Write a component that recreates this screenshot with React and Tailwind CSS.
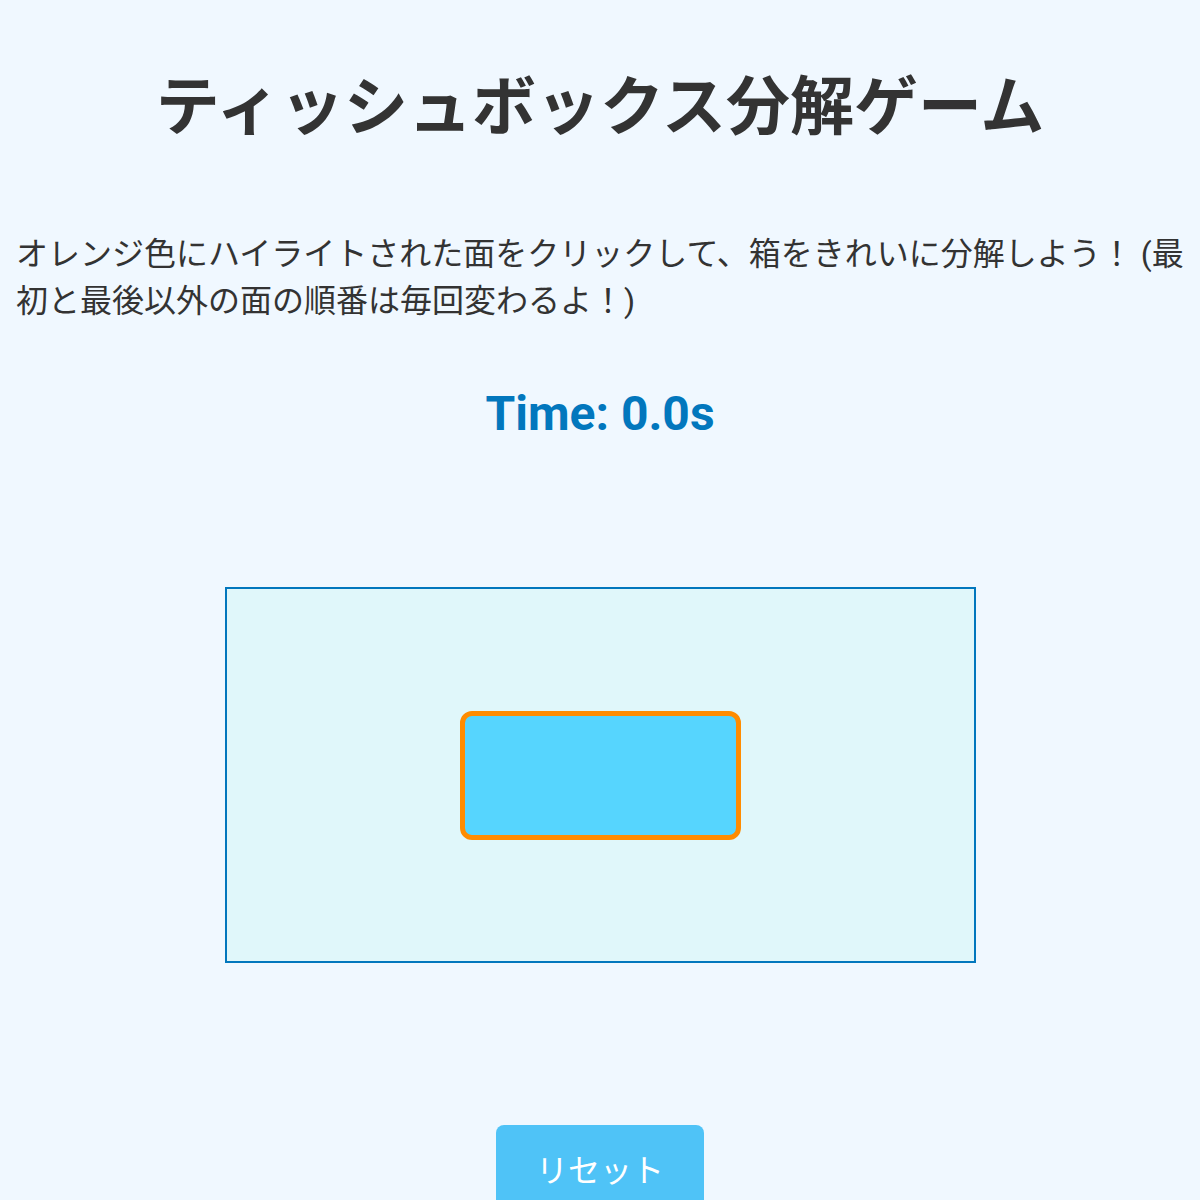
import React from "react";

const App = () => {
  const [time] = React.useState(0);

  return (
    <div
      className="min-h-[1200px] bg-[#f0f8ff] px-[16px] pt-[16px] text-[#333] overflow-hidden"
      style={{ fontFamily: 'Roboto, "Noto Sans CJK JP", sans-serif' }}
    >
      {/* Title */}
      <h1 className="mt-[44px] text-center text-[64px] font-bold leading-[96px]">
        ティッシュボックス分解ゲーム
      </h1>

      {/* Instructions */}
      <p className="mt-[75px] mr-[-6px] text-[32px] leading-[47px]">
        オレンジ色にハイライトされた面をクリックして、箱をきれいに分解しよう！ (最初と最後以外の面の順番は毎回変わるよ！)
      </p>

      {/* Timer */}
      <div className="mt-[53px] text-center text-[48px] font-bold leading-[72px] text-[#0277bd]">
        Time: {time.toFixed(1)}s
      </div>

      {/* Game area */}
      <div className="mt-[137px] flex justify-center">
        <div className="flex h-[376px] w-[751px] items-center justify-center border-2 border-[#0277bd] bg-[#e0f7fa]">
          <div className="h-[129px] w-[281px] cursor-pointer rounded-[12px] border-[5px] border-[#ff8c00] bg-[#56d5fe]" />
        </div>
      </div>

      {/* Reset */}
      <div className="mt-[162px] flex justify-center">
        <button className="rounded-[8px] bg-[#4fc3f7] px-[40px] py-[22px] text-[32px] leading-[48px] text-white">
          リセット
        </button>
      </div>
    </div>
  );
};

export default App;
